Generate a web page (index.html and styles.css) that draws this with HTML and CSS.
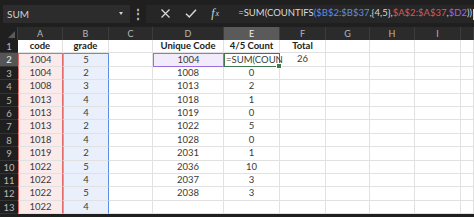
FILE: index.html
```html
<!DOCTYPE html>
<html lang="en">
<head>
    <meta charset="UTF-8">
    <title>SUM COUNTIFS</title>
    <link rel="stylesheet" href="styles.css">
</head>
<body>
    <div class="topbar">
        <div class="name-box">
            <span>SUM</span>
            <span class="caret"></span>
        </div>
        <div class="grip">&#8942;</div>
        <div class="formula-bar">
            <span class="btn">
                <svg width="11" height="11" viewBox="0 0 11 11"><path d="M1.5 1.5 L9.5 9.5 M9.5 1.5 L1.5 9.5" stroke="#d6d6d6" stroke-width="1.3" fill="none"/></svg>
            </span>
            <span class="btn">
                <svg width="12" height="11" viewBox="0 0 12 11"><path d="M1 5.8 L4.3 9 L11 1.8" stroke="#d6d6d6" stroke-width="1.5" fill="none"/></svg>
            </span>
            <span class="btn fx"><i>f</i><sub>x</sub></span>
            <div class="formula">=SUM(COUNTIFS<span class="ref-b">($B$2:$B$37</span>,{4,5},<span class="ref-a">$A$2:$A$37</span>,<span class="ref-d">$D2</span>))<span class="cursor"></span></div>
        </div>
    </div>

    <div class="sheet" id="sheet"></div>

    <script>
        const cols = ['', 'A', 'B', 'C', 'D', 'E', 'F', 'G', 'H', 'I', ''];
        const rows = [
            ['code', 'grade', '', 'Unique Code', '4/5 Count', 'Total'],
            ['1004', '5', '', '1004', '=SUM(COUN', '26'],
            ['1004', '2', '', '1008', '0', ''],
            ['1008', '3', '', '1013', '2', ''],
            ['1013', '4', '', '1018', '1', ''],
            ['1013', '4', '', '1019', '0', ''],
            ['1013', '2', '', '1022', '5', ''],
            ['1018', '4', '', '1028', '0', ''],
            ['1019', '2', '', '2031', '1', ''],
            ['1022', '5', '', '2036', '10', ''],
            ['1022', '4', '', '2037', '3', ''],
            ['1022', '5', '', '2038', '3', ''],
            ['1022', '4', '', '', '', '']
        ];

        const sheet = document.getElementById('sheet');

        function cell(text, cls) {
            const el = document.createElement('div');
            el.className = cls;
            el.textContent = text;
            sheet.appendChild(el);
            return el;
        }

        cols.forEach((c, i) => {
            let cls = 'col-head';
            if (i === 0) cls += ' corner';
            if (c === 'E') cls += ' active';
            cell(c, cls);
        });

        rows.forEach((row, r) => {
            const num = r + 1;
            cell(num, num === 2 ? 'row-head active' : 'row-head');
            for (let c = 0; c < 10; c++) {
                let cls = 'cell';
                if (num === 1) cls += ' bold';
                if (num > 1 && c === 0) cls += ' range-a';
                if (num > 1 && c === 1) cls += ' range-b';
                if (num === 2 && c < 2) cls += ' range-top';
                if (num === 2 && c === 3) cls += ' range-d';
                if (num === 2 && c === 4) cls += ' current';
                cell(row[c] || '', cls);
            }
        });
    </script>
</body>
</html>
```

FILE: styles.css
```css
body {
    margin: 0;
    padding: 0;
    width: 474px;
    height: 217px;
    overflow: hidden;
    background: #1f1f1f;
    font-family: Lato, "Open Sans", sans-serif;
}

.topbar {
    display: flex;
    align-items: center;
    height: 27px;
    padding: 0 0 0 3px;
    background: #1f1f1f;
}

.name-box {
    display: flex;
    align-items: center;
    justify-content: space-between;
    width: 137px;
    height: 18px;
    padding: 0 7px 0 4px;
    box-sizing: border-box;
    background: #2c2c2c;
    color: #cfcfcf;
    font-size: 10px;
}

.caret {
    width: 0;
    height: 0;
    border-left: 2.5px solid transparent;
    border-right: 2.5px solid transparent;
    border-top: 3px solid #d0d0d0;
}

.grip {
    width: 18px;
    text-align: center;
    color: #bdbdbd;
    font-size: 12px;
    font-weight: bold;
}

.formula-bar {
    flex: 1;
    display: flex;
    align-items: center;
    height: 18px;
    background: #262626;
    padding-left: 6px;
}

.btn {
    display: flex;
    align-items: center;
    justify-content: center;
    width: 26px;
    height: 18px;
    color: #d6d6d6;
}

.fx {
    font-family: "Liberation Serif", serif;
    font-size: 12px;
    width: 22px;
}

.fx sub {
    font-size: 8px;
    font-style: italic;
    margin-left: 1px;
}

.formula {
    margin-left: 12px;
    color: #d9d9d9;
    font-size: 9.5px;
    white-space: nowrap;
}

.ref-b {
    color: #5f8fe0;
}

.ref-a {
    color: #d85a5a;
}

.ref-d {
    color: #9b6ae0;
}

.cursor {
    display: inline-block;
    width: 1px;
    height: 11px;
    margin-left: 1px;
    vertical-align: middle;
    background: #e0e0e0;
}

.sheet {
    display: grid;
    grid-template-columns: 18px 45px 46px 44px 71px 56px 46px 44px 45px 46px 1fr;
    grid-template-rows: 13px repeat(13, 13.4px);
}

.col-head {
    background: #2b2b2b;
    color: #b8b8b8;
    font-size: 9px;
    line-height: 13px;
    text-align: center;
    border-right: 1px solid #3c3c3c;
    box-sizing: border-box;
}

.col-head.corner {
    background: #1f1f1f;
    position: relative;
}

.col-head.corner::after {
    content: "";
    position: absolute;
    right: 2px;
    bottom: 2px;
    width: 0;
    height: 0;
    border-left: 7px solid transparent;
    border-bottom: 7px solid #5a5a5a;
}

.col-head.active {
    background: #5a5a5a;
    color: #eeeeee;
}

.row-head {
    background: #1f1f1f;
    color: #b8b8b8;
    font-size: 9.5px;
    line-height: 13.4px;
    text-align: center;
    border-bottom: 1px solid #333;
    box-sizing: border-box;
}

.row-head.active {
    background: #555555;
    color: #f0f0f0;
}

.cell {
    background: #ffffff;
    color: #3a3a3a;
    font-size: 9.5px;
    line-height: 12.4px;
    text-align: center;
    border-right: 1px solid #e1e1e1;
    border-bottom: 1px solid #e1e1e1;
    box-sizing: border-box;
    white-space: nowrap;
    overflow: hidden;
}

.cell.bold {
    font-weight: bold;
    color: #222222;
}

.range-a {
    background: #fbeaea;
    border-left: 1px solid #e36a6a;
    border-right: 1px solid #e36a6a;
}

.range-b {
    background: #e9f0fb;
    border-left: 1px solid #8fb2ee;
    border-right: 1.5px solid #5b8fe6;
}

.range-top.range-a {
    border-top: 1px solid #e36a6a;
}

.range-top.range-b {
    border-top: 1px solid #5b8fe6;
}

.range-d {
    background: #f1ebfb;
    border: 1px solid #9a6ee0;
}

.current {
    position: relative;
    text-align: left;
    padding-left: 1px;
    border: 1.5px solid #3d7a4e;
    overflow: visible;
}

.current::after {
    content: "";
    position: absolute;
    right: -3px;
    bottom: -3px;
    width: 4px;
    height: 4px;
    background: #3d7a4e;
    border: 1px solid #ffffff;
}
```
